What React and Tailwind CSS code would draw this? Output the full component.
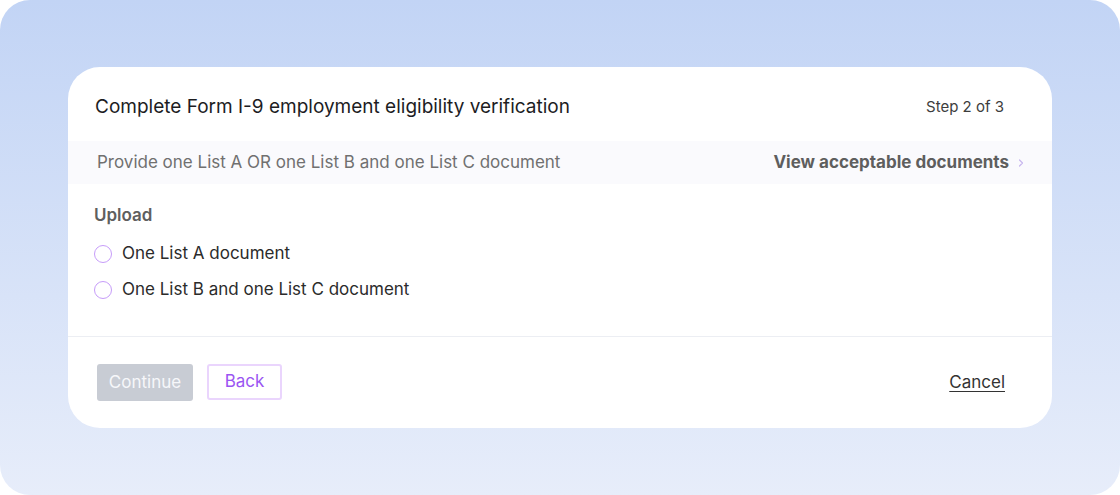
import React from 'react';

const Radio = ({label}) => (
    <label className="flex items-center gap-[10px] h-[36px] cursor-pointer">
        <span className="w-[18px] h-[18px] rounded-full border-[1.5px] border-[#c69cf9] bg-white shrink-0"></span>
        <span className="text-[17px] text-[#2b2b2b]">{label}</span>
    </label>
);

const App = () => {
    return (
        <div className="w-[1120px] h-[495px] rounded-[30px] bg-gradient-to-b from-[#c2d4f5] to-[#e7edfa] flex items-center justify-center" style={{fontFamily: 'Inter, "Noto Sans", sans-serif'}}>
            <div className="w-[984px] h-[361px] bg-white rounded-[32px] flex flex-col overflow-hidden">
                {/* header */}
                <div className="h-[74px] shrink-0 flex items-center justify-between pl-[27px] pr-[48px] pt-[6px]">
                    <p className="text-[19px] text-[#1d1d1f]">Complete Form I-9 employment eligibility verification</p>
                    <p className="text-[15px] text-[#3d3d3d]">Step 2 of 3</p>
                </div>

                {/* info band */}
                <div className="h-[43px] shrink-0 flex items-center justify-between bg-[#fafafd] pl-[29px] pr-[27px]">
                    <p className="text-[17px] text-[#707070]">Provide one List A OR one List B and one List C document</p>
                    <a className="flex items-center gap-[8px] text-[17px] font-bold text-[#5e5e5e]">
                        View acceptable documents
                        <svg width="8" height="10" viewBox="0 0 8 10" fill="none">
                            <path d="M2.5 2 L5.5 5 L2.5 8" stroke="#c7b6ee" strokeWidth="1.2" strokeLinecap="round" strokeLinejoin="round"/>
                        </svg>
                    </a>
                </div>

                {/* body */}
                <div className="flex-1 flex flex-col pl-[26px] pt-[19px] border-b border-[#eceef3]">
                    <p className="text-[17px] leading-[24px] font-semibold text-[#5f5f5f] mb-[9px]">Upload</p>
                    <Radio label="One List A document"/>
                    <Radio label="One List B and one List C document"/>
                </div>

                {/* footer */}
                <div className="h-[91px] shrink-0 flex items-center justify-between pl-[29px] pr-[47px]">
                    <div className="flex items-center gap-[14px]">
                        <button className="w-[96px] h-[37px] rounded-[3px] bg-[#c8ccd4] text-[17px] text-[#f6f7fa]" disabled>Continue</button>
                        <button className="w-[75px] h-[36px] rounded-[3px] border-2 border-[#ead5fd] bg-white text-[17px] text-[#9a55f2] -mt-[1px]">Back</button>
                    </div>
                    <a className="text-[17px] text-[#333333] underline underline-offset-[3px] mt-[1px]">Cancel</a>
                </div>
            </div>
        </div>
    );
}

export default App;
